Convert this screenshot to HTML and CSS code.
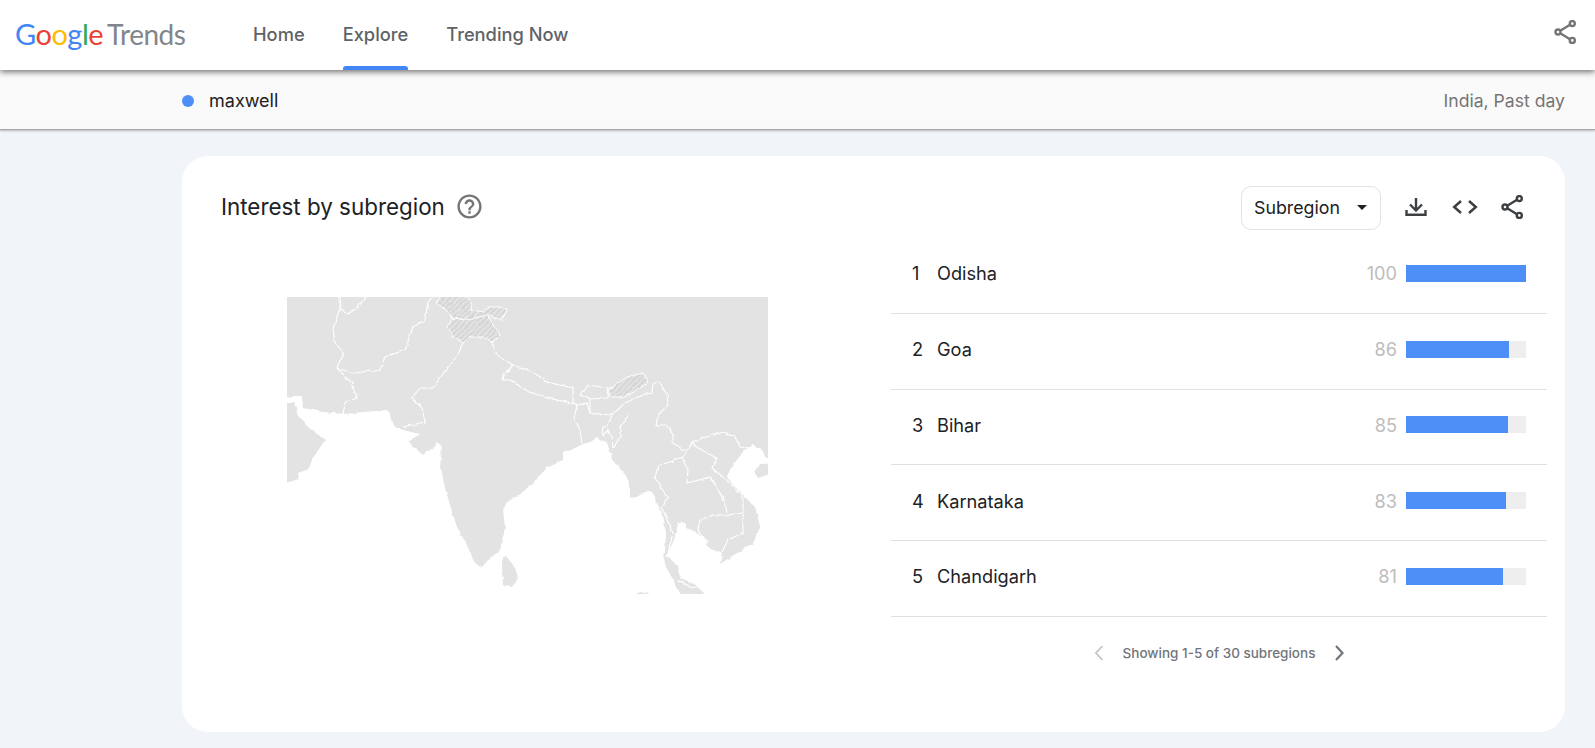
FILE: index.html
```html
<!DOCTYPE html>
<html lang="en">
<head>
  <meta charset="UTF-8">
  <title>maxwell - Explore - Google Trends</title>
  <link rel="stylesheet" href="styles.css">
</head>
<body>

<header class="topbar">
  <div class="logo">
    <span class="logo-google"><span class="blue">G</span><span class="red">o</span><span class="yellow">o</span><span class="blue">g</span><span class="green">l</span><span class="red">e</span></span>
    <span class="logo-trends">Trends</span>
  </div>
  <nav class="nav">
    <a class="nav-item">Home</a>
    <a class="nav-item active">Explore</a>
    <a class="nav-item">Trending Now</a>
  </nav>
  <svg class="icon share-top" viewBox="0 0 24 24"><use href="#share"/></svg>
</header>

<div class="termbar">
  <div class="term"><span class="dot"></span>maxwell</div>
  <div class="scope">India, Past day</div>
</div>

<svg class="defs" width="0" height="0">
  <symbol id="share" viewBox="0 0 24 24">
    <path d="M17 4.800 7.200 10.700M7.200 13.300 17 19.200" fill="none" stroke="currentColor" stroke-width="2.400"/>
    <circle cx="19.300" cy="3.600" r="2.500" fill="none" stroke="currentColor" stroke-width="2.400"/>
    <circle cx="5" cy="12" r="2.500" fill="none" stroke="currentColor" stroke-width="2.400"/>
    <circle cx="19.300" cy="20.400" r="2.500" fill="none" stroke="currentColor" stroke-width="2.400"/>
  </symbol>
  <pattern id="hatch" width="4" height="4" patternUnits="userSpaceOnUse" patternTransform="rotate(45)">
    <rect width="4" height="4" fill="#e3e3e3"/>
    <rect width="1.600" height="4" fill="#d2d2d2"/>
  </pattern>
  <!-- roughens the hand traced borders so they read like a real map -->
  <filter id="rough" filterUnits="userSpaceOnUse" x="270" y="280" width="520" height="330">
    <feTurbulence type="fractalNoise" baseFrequency="0.16" numOctaves="2" seed="4" result="noise"/>
    <feDisplacementMap in="SourceGraphic" in2="noise" scale="3.500" xChannelSelector="R" yChannelSelector="G"/>
    <feGaussianBlur stdDeviation="0.350"/>
  </filter>
</svg>

<main class="page">
  <section class="card">
    <div class="card-head">
      <div class="card-title">
        <h2>Interest by subregion</h2>
        <svg class="help" viewBox="0 0 24 24"><path d="M11 18h2v-2h-2v2zm1-16C6.480 2 2 6.480 2 12s4.480 10 10 10 10-4.480 10-10S17.520 2 12 2zm0 18c-4.410 0-8-3.590-8-8s3.590-8 8-8 8 3.590 8 8-3.590 8-8 8zm0-14c-2.210 0-4 1.790-4 4h2c0-1.100.900-2 2-2s2 .900 2 2c0 2-3 1.750-3 5h2c0-2.250 3-2.500 3-5 0-2.210-1.790-4-4-4z"/></svg>
      </div>
      <div class="card-tools">
        <div class="select">Subregion<span class="caret"></span></div>
        <svg class="tool" viewBox="0 0 28 28"><path d="M14 5v12.500M8 11.500l6 6 6-6M4.500 17v4.700h19V17" fill="none" stroke="currentColor" stroke-width="2.400"/></svg>
        <svg class="tool" viewBox="0 0 28 28"><path d="M10 8 3.200 14 10 20M18 8l6.800 6L18 20" fill="none" stroke="currentColor" stroke-width="2.500"/></svg>
        <svg class="tool tool-share" viewBox="0 0 24 24"><use href="#share"/></svg>
      </div>
    </div>

    <div class="card-body">
      <div class="map-wrap">
        <svg class="map" viewBox="287 297 481 297">
          <g filter="url(#rough)">
            <path class="land" d="M280 290H776V461L769 460 767 458 762 450 752 445 744 451 737 460 731 468 727 476 733 485 743 495 755 507 760 527 753 543 737 553 720 564 722 553 710 549 703 537 698 533 687 528 685 522 678 522 677 528 674 540 667 555 671 560 677 565 680 578 693 583 705 594 708 600H682L680 594 667 568 664 560 665 550 666 533 663 515 658 505 653 495 650 490 648 490 640 495 635 498 630 497 630 490 627 477 613 460 607 443 598 438 590 442 580 445 577 447 563 453 563 460 547 468 533 482 522 493 507 502 503 510 505 527 500 550 485 563 482 568 475 563 468 547 457 527 450 505 445 488 442 473 440 468 442 447 437 442 433 448 423 455 408 442 420 434 403 430 395 427 387 410 363 412 343 414 323 412 303 408 302 396 293 396 280 399Z"/>
            <path class="land" d="M280 402H293L295 405 297 413 300 418 308 427 325 440 313 458 308 470 298 473 297 480 280 484Z"/>
            <path class="land" d="M776 463 760 464 754 472 758 478 776 472Z"/>
            <path class="land" d="M505 555 515 567 518 578 512 587 503 585 502 567Z"/>
            <path class="land" d="M636 600V594L640 592 650 594 652 600Z"/>
            <path class="disputed" d="M436 303 443 292H467L472 310 483 312 487 307H500L507 310 502 320 487 315 482 317 467 320 452 318 443 308Z"/>
            <path class="disputed" d="M452 318 448 327 453 337 463 343 470 337H483L492 343 500 335 493 325 487 315 467 320Z"/>
            <path class="disputed" d="M608 390 627 377 643 373 648 383 625 397 610 397Z"/>
            <g class="borders">
              <path d="M338 290 340 308 333 328 335 343 344 353 337 368 353 373 380 370 385 357 405 350 413 327 425 320 428 302 437 292"/>
              <path d="M340 308 348 314 358 307 370 292"/>
              <path d="M337 368 352 383 357 398 345 403 343 414"/>
              <path d="M463 343 457 357 447 368 433 388 420 388 412 398 422 408 425 422 403 427"/>
              <path d="M492 343 497 355 513 365 533 372 547 382 573 388 573 403 547 398 530 392 510 380 503 380 505 373 513 365"/>
              <path d="M573 403 577 405 587 403 590 413 612 415 607 427 602 428 603 435 608 430 612 437 613 448"/>
              <path d="M577 405 574 418 580 430 582 443"/>
              <path d="M580 395 588 385 607 388 608 398 590 399 580 395"/>
              <path d="M590 399 590 413"/>
              <path d="M612 415 625 403 642 395 652 393 653 385 658 382 667 393 668 405 658 415 656 425 667 425 673 435 673 443 682 450 688 450"/>
              <path d="M629 415 620 427 620 437 613 448"/>
              <path d="M688 450 692 442 703 438 723 432 735 437 740 447 750 448"/>
              <path d="M692 442 698 448 717 458 712 468 727 480 743 498 743 513 743 533 728 540 722 552"/>
              <path d="M688 450 682 458 688 470 687 483 707 478 710 477 725 502 727 513"/>
              <path d="M682 458 658 466 655 478 668 498 662 508 673 533 667 557"/>
              <path d="M700 520 713 515 728 515 743 513"/>
              <path d="M700 520 698 530 708 543"/>
              <path d="M678 580 692 588 697 586"/>
            </g>
          </g>
        </svg>
      </div>

      <div class="ranking">
        <div class="row">
          <span class="rank">1</span><span class="name">Odisha</span><span class="value">100</span>
          <span class="track"><span class="fill" style="width:100%"></span></span>
        </div>
        <div class="row">
          <span class="rank">2</span><span class="name">Goa</span><span class="value">86</span>
          <span class="track"><span class="fill" style="width:86%"></span></span>
        </div>
        <div class="row">
          <span class="rank">3</span><span class="name">Bihar</span><span class="value">85</span>
          <span class="track"><span class="fill" style="width:85%"></span></span>
        </div>
        <div class="row">
          <span class="rank">4</span><span class="name">Karnataka</span><span class="value">83</span>
          <span class="track"><span class="fill" style="width:83%"></span></span>
        </div>
        <div class="row">
          <span class="rank">5</span><span class="name">Chandigarh</span><span class="value">81</span>
          <span class="track"><span class="fill" style="width:81%"></span></span>
        </div>
        <div class="pager">
          <svg class="chev off" viewBox="0 0 12 18"><path d="M9.500 2 3 9l6.500 7" fill="none" stroke="currentColor" stroke-width="1.800"/></svg>
          <span>Showing 1-5 of 30 subregions</span>
          <svg class="chev" viewBox="0 0 12 18"><path d="M3 2l6.500 7L3 16" fill="none" stroke="currentColor" stroke-width="2.200"/></svg>
        </div>
      </div>
    </div>
  </section>
</main>

</body>
</html>
```

FILE: styles.css
```css
html, body {
  height: 100%;
}

body {
  margin: 0;
  font-family: 'Inter', 'Noto Sans', sans-serif;
  background: #f1f4f9;
  color: #202124;
  overflow: hidden;
}

.defs {
  position: absolute;
}

.topbar {
  position: relative;
  z-index: 2;
  display: flex;
  align-items: center;
  height: 70px;
  padding: 0 18px 0 15px;
  background: #fff;
  box-shadow: 0 2px 6px rgba(0, 0, 0, 0.55);
}

.logo {
  display: flex;
  align-items: baseline;
  width: 238px;
  padding-bottom: 4px;
  font-family: 'Lato', sans-serif;
  letter-spacing: -0.5px;
}

.logo-google {
  margin-right: 4px;
  font-size: 29px;
}

.logo-trends {
  font-size: 28px;
  color: #80868b;
}

.blue { color: #4285f4; }
.red { color: #ea4335; }
.yellow { color: #fbbc05; }
.green { color: #34a853; }

.nav {
  display: flex;
  align-self: stretch;
  gap: 38px;
}

.nav-item {
  position: relative;
  display: flex;
  align-items: center;
  padding-bottom: 2px;
  font-size: 18.300px;
  font-weight: 500;
  color: #5f6368;
}

.nav-item.active::after {
  content: '';
  position: absolute;
  left: 0;
  right: 0;
  bottom: 0;
  height: 4px;
  background: #4285f4;
  border-radius: 3px 3px 0 0;
}

.icon {
  width: 24px;
  height: 24px;
  color: #757575;
}

.share-top {
  margin-left: auto;
  margin-bottom: 6px;
}

.termbar {
  position: relative;
  z-index: 1;
  display: flex;
  align-items: center;
  justify-content: space-between;
  height: 59px;
  padding: 0 30px 0 182px;
  background: #fafafa;
  border-bottom: 1px solid #a8a8a8;
  box-shadow: 0 1px 2px rgba(0, 0, 0, 0.25);
}

.term {
  display: flex;
  align-items: center;
  padding-top: 2px;
  font-size: 18px;
}

.dot {
  width: 12px;
  height: 12px;
  margin-right: 15px;
  border-radius: 50%;
  background: #4d8ff6;
}

.scope {
  padding-top: 2px;
  font-size: 17.600px;
  color: #757575;
}

.page {
  padding: 26px 30px 0 182px;
}

.card {
  height: 576px;
  padding: 30px 18px 0 39px;
  box-sizing: border-box;
  background: #fff;
  border-radius: 26px;
}

.card-head {
  display: flex;
  align-items: center;
  justify-content: space-between;
  height: 44px;
}

.card-title {
  display: flex;
  align-items: center;
  gap: 10px;
  padding-bottom: 4px;
}

.card-title h2 {
  margin: 0;
  font-size: 22.400px;
  font-weight: 400;
}

.help {
  width: 29px;
  height: 29px;
  fill: #757575;
}

.card-tools {
  display: flex;
  align-items: center;
  gap: 21px;
  padding-right: 23px;
}

.select {
  display: flex;
  align-items: center;
  justify-content: space-between;
  width: 140px;
  height: 44px;
  padding: 0 13px 2px 12px;
  box-sizing: border-box;
  border: 1px solid #e2e2e2;
  border-radius: 10px;
  font-size: 17.800px;
}

.caret {
  width: 0;
  height: 0;
  border-left: 5px solid transparent;
  border-right: 5px solid transparent;
  border-top: 5px solid #202124;
}

.tool {
  width: 28px;
  height: 28px;
  margin-bottom: 3px;
  color: #3c4043;
}

.tool-share {
  width: 24px;
  height: 24px;
}

.card-body {
  display: flex;
  justify-content: space-between;
  margin-top: 8px;
}

.map-wrap {
  padding: 59px 0 0 66px;
}

.map {
  display: block;
  width: 481px;
  height: 297px;
}

.land {
  fill: #e3e3e3;
}

.disputed {
  fill: url(#hatch);
  stroke: #fff;
  stroke-width: 1;
}

.borders path {
  fill: none;
  stroke: #fff;
  stroke-width: 1.100;
}

.ranking {
  width: 656px;
}

.row {
  display: flex;
  align-items: center;
  height: 75.750px;
  padding: 0 21px 4px 21px;
  box-sizing: border-box;
  border-bottom: 1px solid #e0e0e0;
  font-size: 18.200px;
}

.rank {
  width: 25px;
}

.name {
  flex: 1;
}

.value {
  margin-right: 9px;
  color: #bdbdbd;
}

.track {
  width: 120px;
  height: 17px;
  background: #eeeeee;
}

.fill {
  display: block;
  height: 100%;
  background: #4d8ff6;
}

.pager {
  display: flex;
  align-items: center;
  justify-content: center;
  gap: 18px;
  height: 72px;
  font-size: 13.500px;
  font-weight: 500;
  color: #70757a;
}

.chev {
  width: 12px;
  height: 18px;
}

.chev.off {
  color: #c4c4c4;
}
```
